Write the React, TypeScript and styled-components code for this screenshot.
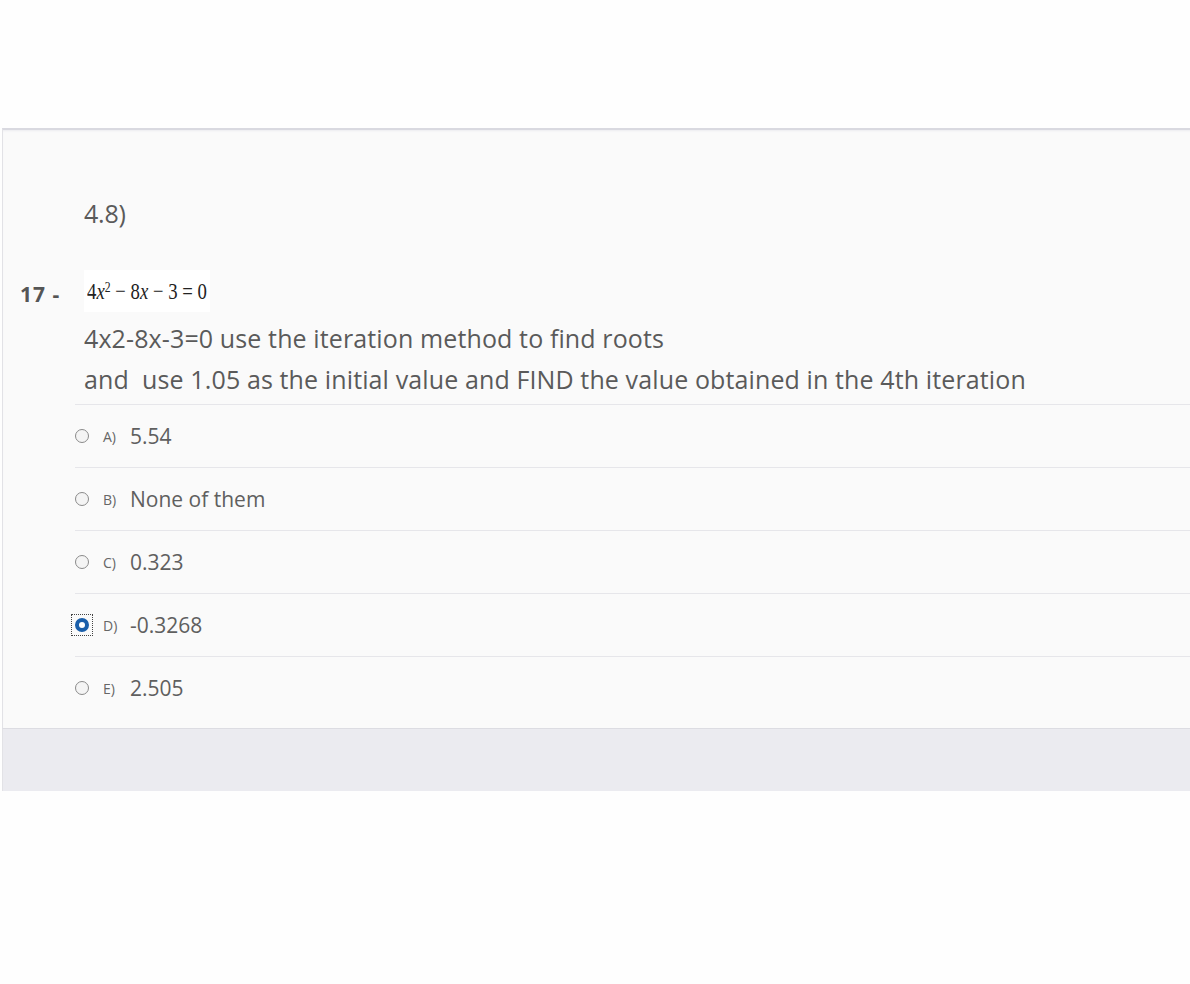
import styled, { createGlobalStyle } from "styled-components";

const GlobalStyle = createGlobalStyle`
  html, body {
    margin: 0;
    padding: 0;
    background: #fefefe;
    font-family: "Open Sans", "Noto Sans", sans-serif;
    color: #5a5a5a;
  }
`;

const options = [
  { letter: "A)", value: "5.54", checked: false },
  { letter: "B)", value: "None of them", checked: false },
  { letter: "C)", value: "0.323", checked: false },
  { letter: "D)", value: "-0.3268", checked: true },
  { letter: "E)", value: "2.505", checked: false },
];

export default function App() {
  return (
    <>
      <GlobalStyle />
      <Page>
        <Card>
          <Question>
            <span />
            <Intro>4.8)</Intro>
            <Number>17 -</Number>
            <EquationBox>
              <Equation>
                4<i>x</i>
                <sup>2</sup> − 8<i>x</i> − 3 = 0
              </Equation>
            </EquationBox>
            <span />
            <Text>
              <Line>4x2-8x-3=0 use the iteration method to find roots</Line>
              <Line>and&nbsp; use 1.05 as the initial value and FIND the value obtained in the 4th iteration</Line>
            </Text>
          </Question>
          <Options>
            {options.map((opt) => (
              <Option key={opt.letter}>
                <Radio $checked={opt.checked} />
                <Letter>{opt.letter}</Letter>
                <Value>{opt.value}</Value>
              </Option>
            ))}
          </Options>
        </Card>
        <Footer />
      </Page>
    </>
  );
}

const Page = styled.div`
  padding-top: 128px;
  padding-left: 2px;
  width: 1188px;
  overflow: hidden;
`;

const Card = styled.div`
  background: #fafafa;
  border-top: 2px solid #d9d9e0;
  border-left: 1px solid #e2e2e6;
  box-shadow: inset 0 2px 2px -1px #ececf0;
  padding: 68px 0 9px 0;
  width: 1300px;
`;

const Question = styled.div`
  display: grid;
  grid-template-columns: 81px 1fr;
  align-items: center;
`;

const Intro = styled.div`
  font-size: 25px;
  line-height: 30px;
  letter-spacing: -0.2px;
  color: #5a5a5a;
  margin-bottom: 42px;
`;

const Number = styled.div`
  font-size: 21px;
  font-weight: 700;
  letter-spacing: 1px;
  color: #555;
  padding-left: 17px;
  padding-top: 6px;
`;

const EquationBox = styled.div`
  background: #fff;
  width: 126px;
  height: 42px;
  display: flex;
  align-items: center;
  overflow: hidden;
`;

const Equation = styled.span`
  display: inline-block;
  font-family: "Liberation Serif", "DejaVu Serif", serif;
  font-size: 24px;
  line-height: 1;
  color: #222;
  white-space: nowrap;
  transform: scaleX(0.78);
  transform-origin: left center;
  padding-left: 4px;

  i {
    font-style: italic;
  }

  sup {
    font-size: 15px;
    line-height: 0;
    position: relative;
    top: 2px;
  }
`;

const Text = styled.div`
  padding-top: 6px;
  padding-bottom: 4px;
`;

const Line = styled.div`
  font-size: 25px;
  line-height: 41px;
  letter-spacing: 0.12px;
  color: #5a5a5a;
`;

const Options = styled.div`
  margin-left: 72px;
`;

const Option = styled.div`
  display: flex;
  align-items: center;
  height: 62px;
  border-top: 1px solid #e6e6ea;
`;

const Radio = styled.span<{ $checked: boolean }>`
  position: relative;
  box-sizing: border-box;
  width: 14px;
  height: 14px;
  border-radius: 50%;
  border: ${(p) => (p.$checked ? "4px solid #1b5faa" : "1.5px solid #8a8a8a")};
  background: ${(p) => (p.$checked ? "#fff" : "#f4f4f4")};
  margin-right: 14px;

  &::after {
    content: "";
    display: ${(p) => (p.$checked ? "block" : "none")};
    position: absolute;
    inset: -8px;
    border: 1px dotted #444;
  }
`;

const Letter = styled.span`
  font-size: 14px;
  color: #666;
  width: 27px;
`;

const Value = styled.span`
  font-size: 21px;
  color: #5f5f5f;
`;

const Footer = styled.div`
  height: 62px;
  background: #ebebf0;
  border-top: 1px solid #dcdce2;
  border-left: 1px solid #e2e2e6;
`;
